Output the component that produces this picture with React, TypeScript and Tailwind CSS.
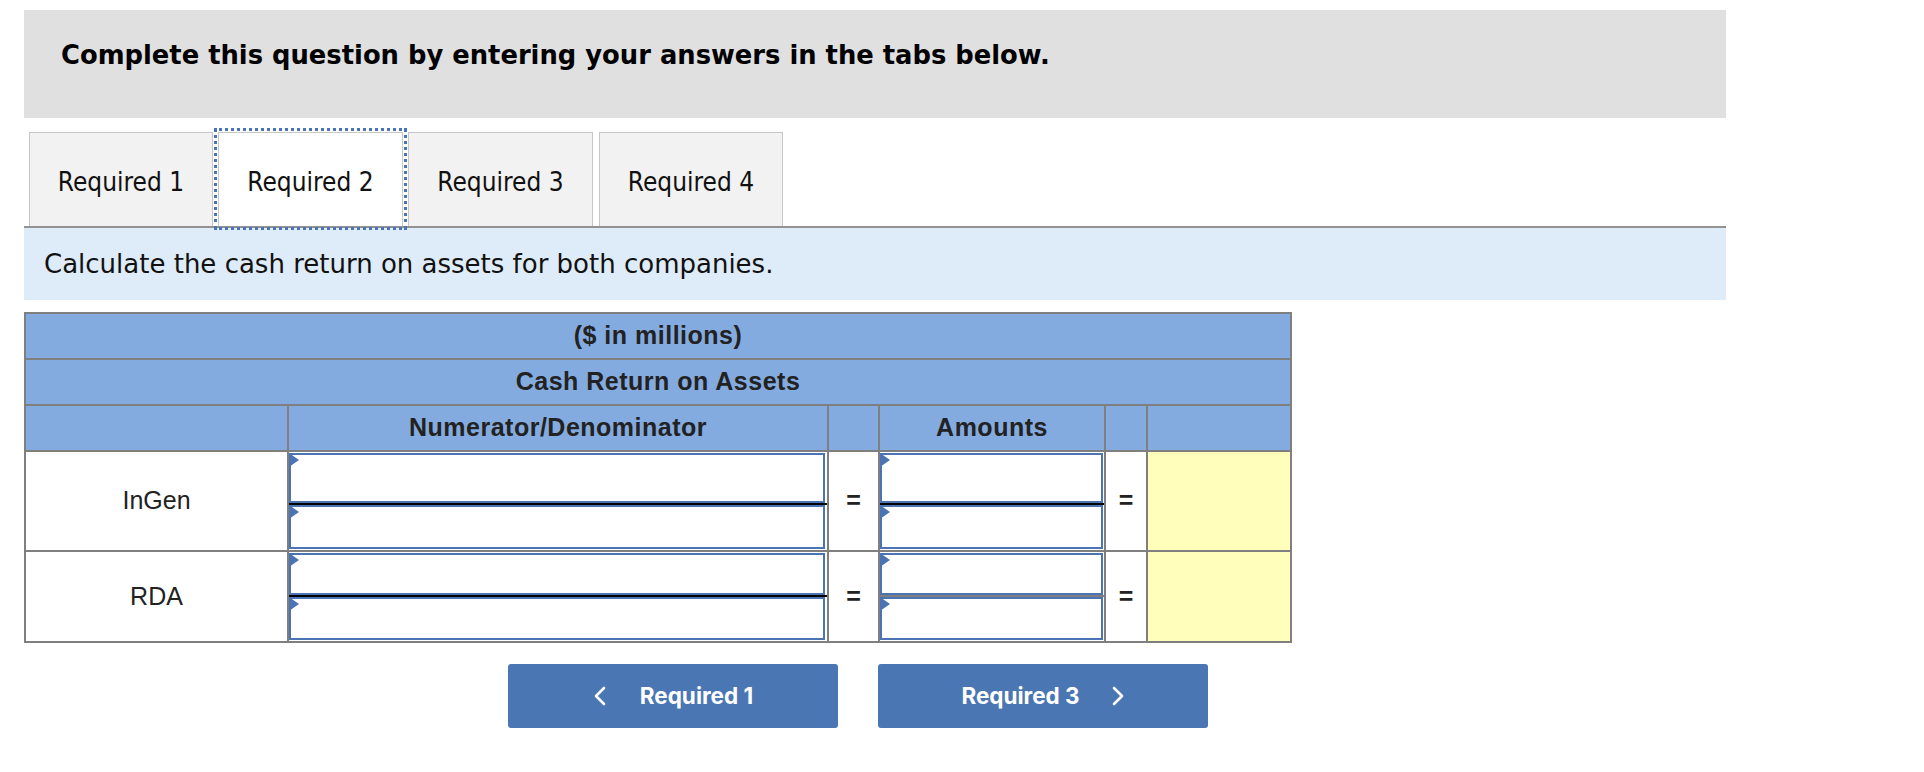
import React from "react";

const Tri = () => (
  <svg
    className="absolute -left-[2px] -top-[2px]"
    width="10"
    height="14"
    viewBox="0 0 10 14"
  >
    <polygon points="0,0 10,7 0,14" fill="#4a74b4" />
  </svg>
);

const Eq = () => (
  <div className="bg-white flex items-center justify-center font-bold text-[25px] text-[#222] font-['Liberation_Sans',Arial,sans-serif]">
    =
  </div>
);

const ChevLeft = () => (
  <svg width="14" height="20" viewBox="0 0 14 20" fill="none">
    <polyline points="11,2 3,10 11,18" stroke="white" strokeWidth="2.6" strokeLinecap="round" strokeLinejoin="round" />
  </svg>
);
const ChevRight = () => (
  <svg width="14" height="20" viewBox="0 0 14 20" fill="none">
    <polyline points="3,2 11,10 3,18" stroke="white" strokeWidth="2.6" strokeLinecap="round" strokeLinejoin="round" />
  </svg>
);

export default function App() {
  const sans = "font-['DejaVu_Sans',Verdana,sans-serif]";
  const tabFont = "font-['DejaVu_Sans_Condensed','DejaVu_Sans',Tahoma,sans-serif]";
  return (
    <div className="min-h-screen bg-white pl-[24px] pt-[10px]">
      <div className="w-[1702px]">
        {/* header */}
        <div className="h-[108px] bg-[#e0e0e0] pl-[37px] pt-[30px]">
          <div className={`${sans} font-bold text-[25.8px] leading-[30px] text-black`}>
            Complete this question by entering your answers in the tabs below.
          </div>
        </div>

        {/* tabs */}
        <div className={`${tabFont} flex items-end h-[94px] pl-[5px] mt-[14px] text-[26px] text-[#111]`}>
          <div className="w-[184px] h-[94px] pt-[6px] border border-b-0 border-[#c6c6c6] bg-[#f2f2f2] flex items-center justify-center">
            Required 1
          </div>
          <div className="relative z-10 ml-[5px] w-[185px] h-[94px] pt-[6px] border border-b-0 border-[#c6c6c6] bg-white flex items-center justify-center outline-[3px] outline-dotted outline-[#4a74b4] outline-offset-1">
            Required 2
          </div>
          <div className="ml-[5px] w-[185px] h-[94px] pt-[6px] border border-b-0 border-[#c6c6c6] bg-[#f2f2f2] flex items-center justify-center">
            Required 3
          </div>
          <div className="ml-[6px] w-[184px] h-[94px] pt-[6px] border border-b-0 border-[#c6c6c6] bg-[#f2f2f2] flex items-center justify-center">
            Required 4
          </div>
        </div>
        <div className="h-[2px] bg-[#939393]" />
        <div className={`${sans} h-[72px] bg-[#deebf8] flex items-center pl-[20px] text-[26px] text-[#111]`}>
          Calculate the cash return on assets for both companies.
        </div>

        {/* table */}
        <div className="mt-[12px] w-fit grid grid-cols-[261px_538px_49px_224px_40px_142px] grid-rows-[44px_44px_44px_98px_89px] gap-[2px] p-[2px] bg-[#7f7f7f] font-['Liberation_Sans',Arial,sans-serif] text-[#222]">
          <div className="col-span-6 bg-[#84abdf] flex items-center justify-center font-bold text-[25px] tracking-[0.5px]">
            ($ in millions)
          </div>
          <div className="col-span-6 bg-[#84abdf] flex items-center justify-center font-bold text-[25px] tracking-[0.5px]">
            Cash Return on Assets
          </div>
          <div className="bg-[#84abdf]" />
          <div className="bg-[#84abdf] flex items-center justify-center font-bold text-[25px] tracking-[0.5px]">
            Numerator/Denominator
          </div>
          <div className="bg-[#84abdf]" />
          <div className="bg-[#84abdf] flex items-center justify-center font-bold text-[25px] tracking-[0.5px]">
            Amounts
          </div>
          <div className="bg-[#84abdf]" />
          <div className="bg-[#84abdf]" />

          {/* InGen */}
          <div className="bg-white flex items-center justify-center text-[25px]">InGen</div>
          <div className="bg-white flex flex-col pt-[1px]">
            <div className="relative h-[50px] mr-[2px] border-2 border-[#4a74b4]"><Tri /></div>
            <div className="h-[2px] bg-black" />
            <div className="relative h-[44px] mr-[2px] border-2 border-[#4a74b4]"><Tri /></div>
          </div>
          <Eq />
          <div className="bg-white flex flex-col pt-[1px]">
            <div className="relative h-[50px] mr-[1px] border-2 border-[#4a74b4]"><Tri /></div>
            <div className="h-[2px] bg-black" />
            <div className="relative h-[44px] mr-[1px] border-2 border-[#4a74b4]"><Tri /></div>
          </div>
          <Eq />
          <div className="bg-[#ffffbb]" />

          {/* RDA */}
          <div className="bg-white flex items-center justify-center text-[25px]">RDA</div>
          <div className="bg-white flex flex-col pt-[1px]">
            <div className="relative h-[42px] mr-[2px] border-2 border-[#4a74b4]"><Tri /></div>
            <div className="h-[2px] bg-black" />
            <div className="relative h-[43px] mr-[2px] border-2 border-[#4a74b4]"><Tri /></div>
          </div>
          <Eq />
          <div className="bg-white flex flex-col pt-[1px]">
            <div className="relative h-[42px] mr-[1px] border-2 border-[#4a74b4]"><Tri /></div>
            <div className="h-[2px] bg-[#7f7f7f]" />
            <div className="relative h-[43px] mr-[1px] border-2 border-[#4a74b4]"><Tri /></div>
          </div>
          <Eq />
          <div className="bg-[#ffffbb]" />
        </div>

        {/* buttons */}
        <div className="mt-[21px] ml-[484px] flex gap-[40px] font-['Inter',sans-serif] font-bold text-[22.5px] text-white">
          <button className="w-[330px] h-[64px] rounded-[3px] bg-[#4a76b4] flex items-center justify-center gap-[33px]">
            <ChevLeft />
            <span>Required 1</span>
          </button>
          <button className="w-[330px] h-[64px] rounded-[3px] bg-[#4a76b4] flex items-center justify-center gap-[31px]">
            <span>Required 3</span>
            <ChevRight />
          </button>
        </div>
      </div>
    </div>
  );
}
